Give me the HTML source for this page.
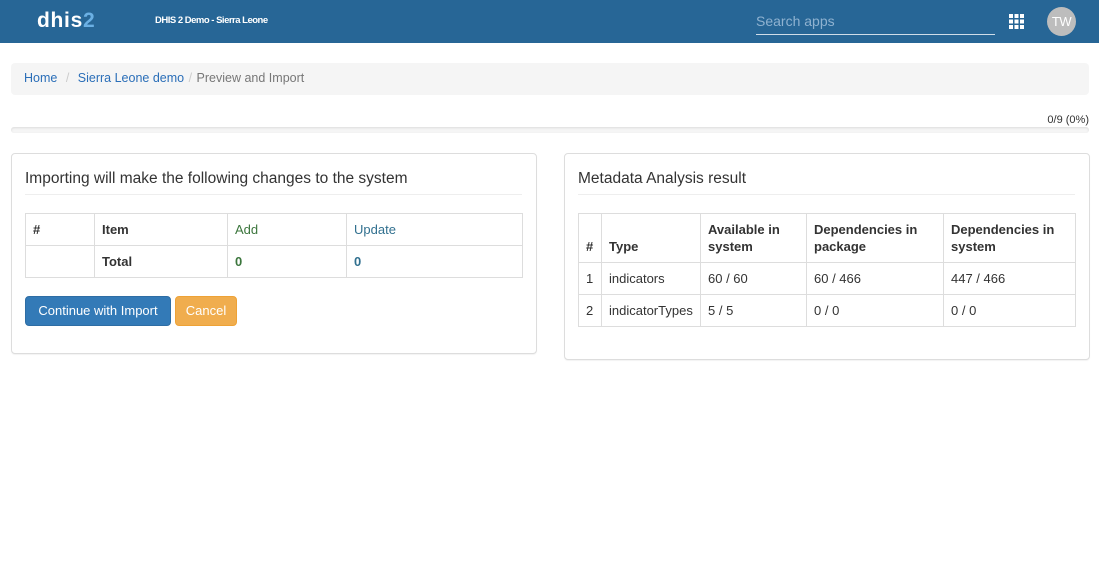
<!DOCTYPE html>
<html><head><style>
*{box-sizing:border-box;margin:0;padding:0}
body{width:1099px;height:574px;background:#fff;font-family:"Liberation Sans",sans-serif;color:#333;position:relative;overflow:hidden;font-size:13px}
.a{position:absolute}
.hdr{left:0;top:0;width:1099px;height:43px;background:#276696}
table{border-collapse:collapse;position:absolute;table-layout:fixed}
td{border:1px solid #ddd;padding:0 7px;font-size:13px;vertical-align:middle}
.panel{border:1px solid #ddd;border-radius:4px;background:#fff;box-shadow:0 1px 1px rgba(0,0,0,.05)}
.title{font-size:15.5px;color:#333}
.hr{height:1px;background:#eee}
</style></head><body>
<div class="a hdr"></div>
<div class="a" style="left:37px;top:9px;font-size:21px;font-weight:bold;color:#fff;letter-spacing:0.7px">dhis<span style="color:#6bb0e4">2</span></div>
<div class="a" style="left:155px;top:15px;font-size:9.5px;font-weight:bold;color:#fff;letter-spacing:-0.5px">DHIS 2 Demo - Sierra Leone</div>
<div class="a" style="left:756px;top:13px;font-size:14px;color:#8fb2d0">Search apps</div>
<div class="a" style="left:756px;top:34px;width:239px;height:1px;background:#cfdde9"></div>
<svg class="a" style="left:1009px;top:14px" width="15" height="15" fill="#fff"><rect x="0" y="0" width="4" height="4"/><rect x="5.5" y="0" width="4" height="4"/><rect x="11" y="0" width="4" height="4"/><rect x="0" y="5.5" width="4" height="4"/><rect x="5.5" y="5.5" width="4" height="4"/><rect x="11" y="5.5" width="4" height="4"/><rect x="0" y="11" width="4" height="4"/><rect x="5.5" y="11" width="4" height="4"/><rect x="11" y="11" width="4" height="4"/></svg>
<div class="a" style="left:1047px;top:7px;width:29px;height:29px;border-radius:50%;background:#bdbdbd;color:#fff;font-size:13px;line-height:29px;text-align:center;letter-spacing:-0.5px">TW</div>

<div class="a" style="left:11px;top:63px;width:1078px;height:32px;background:#f5f5f5;border-radius:4px"></div>
<div class="a" style="left:24px;top:71px;font-size:12.5px;color:#2a6eb8">Home <span style="color:#ccc;padding:0 5px">/</span> Sierra Leone demo <span style="color:#ccc;padding:0 1px">/</span> <span style="color:#777">Preview and Import</span></div>

<div class="a" style="right:10px;top:114px;font-size:11px;color:#333">0/9 (0%)</div>
<div class="a" style="left:11px;top:127px;width:1078px;height:6px;background:#f5f5f5;border-radius:3px;box-shadow:inset 0 1px 2px rgba(0,0,0,.1)"></div>

<div class="a panel" style="left:11px;top:153px;width:526px;height:201px"></div>
<div class="a title" style="left:25px;top:170px">Importing will make the following changes to the system</div>
<div class="a hr" style="left:25px;top:194px;width:497px"></div>
<table style="left:25px;top:213px;width:497px">
<colgroup><col style="width:69px"><col style="width:133px"><col style="width:119px"><col style="width:176px"></colgroup>
<tr style="height:32px"><td style="font-weight:bold">#</td><td style="font-weight:bold">Item</td><td style="color:#3c763d">Add</td><td style="color:#31708f">Update</td></tr>
<tr style="height:32px"><td></td><td style="font-weight:bold">Total</td><td style="color:#3c763d;font-weight:bold">0</td><td style="color:#31708f;font-weight:bold">0</td></tr>
</table>
<div class="a" style="left:25px;top:296px;width:146px;height:30px;background:#337ab7;border:1px solid #2e6da4;border-radius:4px;color:#fff;font-size:13px;line-height:28px;text-align:center">Continue with Import</div>
<div class="a" style="left:175px;top:296px;width:62px;height:30px;background:#f0ad4e;border:1px solid #eea236;border-radius:4px;color:#fff;font-size:13px;line-height:28px;text-align:center">Cancel</div>

<div class="a panel" style="left:564px;top:153px;width:526px;height:207px"></div>
<div class="a title" style="left:578px;top:170px">Metadata Analysis result</div>
<div class="a hr" style="left:578px;top:194px;width:497px"></div>
<table style="left:578px;top:213px;width:497px">
<colgroup><col style="width:23px"><col style="width:99px"><col style="width:106px"><col style="width:137px"><col style="width:132px"></colgroup>
<tr style="height:49px;font-weight:bold"><td style="vertical-align:bottom;padding-bottom:8px">#</td><td style="vertical-align:bottom;padding-bottom:8px;font-weight:bold">Type</td><td style="font-weight:bold;line-height:17px">Available in system</td><td style="font-weight:bold;line-height:17px">Dependencies in package</td><td style="font-weight:bold;line-height:17px">Dependencies in system</td></tr>
<tr style="height:32px"><td>1</td><td>indicators</td><td>60 / 60</td><td>60 / 466</td><td>447 / 466</td></tr>
<tr style="height:32px"><td>2</td><td>indicatorTypes</td><td>5 / 5</td><td>0 / 0</td><td>0 / 0</td></tr>
</table>
</body></html>
